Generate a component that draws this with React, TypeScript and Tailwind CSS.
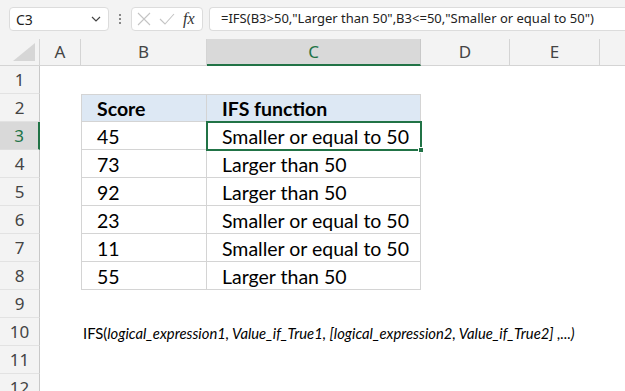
import React from "react";

const rows: { n: number; b?: string; c?: string }[] = [
    { n: 1 },
    { n: 2, b: "Score", c: "IFS function" },
    { n: 3, b: "45", c: "Smaller or equal to 50" },
    { n: 4, b: "73", c: "Larger than 50" },
    { n: 5, b: "92", c: "Larger than 50" },
    { n: 6, b: "23", c: "Smaller or equal to 50" },
    { n: 7, b: "11", c: "Smaller or equal to 50" },
    { n: 8, b: "55", c: "Larger than 50" },
    { n: 9 },
    { n: 10 },
    { n: 11 },
    { n: 12 },
];

const uiFont = { fontFamily: "'Noto Sans', 'Open Sans', sans-serif" };
const cellFont = { fontFamily: "Lato, 'Liberation Sans', sans-serif" };

function FormulaBar() {
    return (
        <div className="flex h-[39px] items-start bg-[#f3f3f3] pt-[7px]" style={uiFont}>
            {/* name box */}
            <div className="ml-[9px] flex h-[24px] w-[100px] items-center justify-between rounded-[4px] border border-[#dcdcdc] bg-white pl-[6px] pr-[7px] text-[14px] text-[#222]">
                <span>C3</span>
                <svg width="10" height="6" viewBox="0 0 10 6">
                    <path d="M1 1 L5 5 L9 1" fill="none" stroke="#444" strokeWidth="1.2" />
                </svg>
            </div>
            <div className="flex h-[24px] w-[22px] flex-col items-center justify-center gap-[2px]">
                <span className="h-[2px] w-[2px] bg-[#888]" />
                <span className="h-[2px] w-[2px] bg-[#888]" />
                <span className="h-[2px] w-[2px] bg-[#888]" />
            </div>
            {/* cancel / enter / fx */}
            <div className="flex h-[24px] w-[72px] items-center rounded-[4px] border border-[#dcdcdc] bg-white pl-[5px]">
                <svg width="14" height="14" viewBox="0 0 14 14">
                    <path d="M1 1 L13 13 M13 1 L1 13" stroke="#c4c4c4" strokeWidth="1.1" />
                </svg>
                <svg width="16" height="14" viewBox="0 0 16 14" className="ml-[8px]">
                    <path d="M1 7 L6 12 L15 2" fill="none" stroke="#c4c4c4" strokeWidth="1.1" />
                </svg>
                <span
                    className="ml-[8px] text-[16px] italic text-[#333]"
                    style={{ fontFamily: "'Liberation Serif', 'DejaVu Serif', serif" }}
                >
                    fx
                </span>
            </div>
            {/* formula */}
            <div className="ml-[6px] flex h-[24px] flex-1 items-center rounded-l-[4px] border border-r-0 border-[#dcdcdc] bg-white pl-[11px] text-[13px] text-[#222]">
                =IFS(B3&gt;50,"Larger than 50",B3&lt;=50,"Smaller or equal to 50")
            </div>
        </div>
    );
}

function ColumnHeaders() {
    const cols = [
        { l: "A", w: "w-[41px]" },
        { l: "B", w: "w-[126px]" },
        { l: "C", w: "w-[214px]", sel: true },
        { l: "D", w: "w-[89px]" },
        { l: "E", w: "w-[90px]" },
    ];
    return (
        <div className="flex h-[27px] bg-[#f3f3f3] text-[17px] text-[#444]" style={uiFont}>
            <div className="relative w-[40px] border-r border-b border-[#d4d4d4]">
                <svg width="22" height="18" viewBox="0 0 22 18" className="absolute bottom-[4px] right-[4px]">
                    <path d="M0 18 L22 18 L22 0 Z" fill="#d6d6d6" />
                </svg>
            </div>
            {cols.map((c) => (
                <div
                    key={c.l}
                    className={
                        c.sel
                            ? `${c.w} flex items-center justify-center border-r border-[#c8c8c8] border-b-2 border-b-[#217346] bg-[#d9d9d9] text-[#217346]`
                            : `${c.w} flex items-center justify-center border-r border-b border-[#d4d4d4]`
                    }
                >
                    {c.l}
                </div>
            ))}
            <div className="flex-1 border-b border-[#d4d4d4]" />
        </div>
    );
}

function Row({ n, b, c }: { n: number; b?: string; c?: string }) {
    const isHead = n === 2;
    const inTable = b !== undefined;
    const selRow = n === 3;
    return (
        <div className="flex h-[28px]">
            <div
                className={
                    selRow
                        ? "flex w-[40px] items-center justify-center border-r-2 border-r-[#217346] border-b border-b-[#dedede] bg-[#d9d9d9] text-[17px] text-[#217346]"
                        : "flex w-[40px] items-center justify-center border-r border-r-[#c8c8c8] border-b border-b-[#e2e2e2] bg-[#f3f3f3] text-[17px] text-[#444]"
                }
                style={uiFont}
            >
                {n}
            </div>
            <div className="w-[41px]" />
            {inTable ? (
                <div className={`flex text-[19.5px] leading-none text-black ${isHead ? "font-bold" : ""}`} style={cellFont}>
                    <div
                        className={`flex w-[126px] items-center border-l border-r border-b border-[#d4d4d4] pt-[2px] pl-[15px] ${isHead ? "border-t bg-[#dde8f4]" : ""}`}
                    >
                        {b}
                    </div>
                    <div
                        className={`flex w-[214px] items-center border-r border-b border-[#d4d4d4] pt-[2px] pl-[15px] ${isHead ? "border-t bg-[#dde8f4]" : ""}`}
                    >
                        {c}
                    </div>
                </div>
            ) : n === 10 ? (
                <div className="flex items-center pl-[2px] pt-[2px] text-[14.8px] text-black" style={cellFont}>
                    IFS(
                    <span className="italic">
                        logical_expression1, Value_if_True1, [logical_expression2, Value_if_True2] ,...)
                    </span>
                </div>
            ) : null}
        </div>
    );
}

export default function App() {
    return (
        <div className="h-[391px] w-[625px] overflow-hidden bg-white">
            <FormulaBar />
            <ColumnHeaders />
            <div className="relative">
                {rows.map((r) => (
                    <Row key={r.n} {...r} />
                ))}
                {/* active cell C3 */}
                <div className="absolute left-[206px] top-[55px] h-[30px] w-[216px] border-2 border-[#217346]">
                    <div className="absolute -bottom-[4px] -right-[4px] h-[6px] w-[6px] border border-white bg-[#217346]" />
                </div>
            </div>
        </div>
    );
}
